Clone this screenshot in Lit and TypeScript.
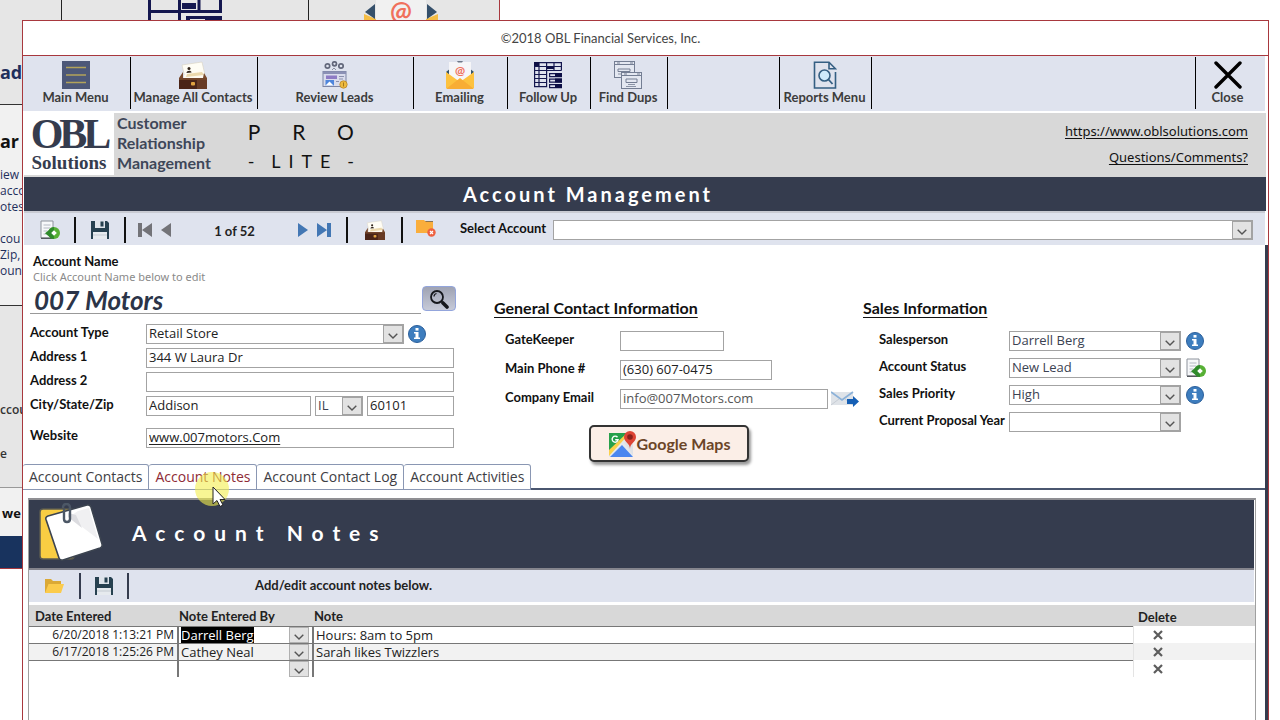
import { LitElement, html, css, type TemplateResult } from "lit";
import { customElement, property } from "lit/decorators.js";
import { classMap } from "lit/directives/class-map.js";

type Icon = TemplateResult;

const menuIcon = html`<svg width="28" height="28" viewBox="0 0 28 28" aria-hidden="true">
  <rect width="28" height="28" fill="#4d5878" />
  <path d="M4 6.500h20M4 14h20M4 21.500h20" stroke="#b3a35a" stroke-width="1.300" />
</svg>`;

const cardBox = (size: number): Icon => html`<svg width=${size} height=${size} viewBox="0 0 28 28" aria-hidden="true">
  <path d="M3 4 23 1l3 13-20 3z" fill="#fffdf5" stroke="#d9d2c0" stroke-width=".6" />
  <path d="M5 14l19-5 1 9H5z" fill="#fffaf0" />
  <path d="M8 13l15-2 2 3-18 2z" fill="#ecd9ad" />
  <circle cx="10" cy="7.500" r="1.500" fill="#33261c" /><path d="M7.500 12c0-3 5-3 5-.6z" fill="#33261c" />
  <path d="M0 17 4 11v6zM28 17l-3-5-1 5z" fill="#7a4a2c" />
  <rect y="17" width="28" height="11" fill="#4a2417" />
  <rect y="17" width="28" height="2" fill="#73452a" />
  <rect x="18" y="19" width="10" height="9" fill="#673a24" />
  <rect x="12" y="21" width="4" height="3.500" rx="1" fill="#e0a341" />
</svg>`;

const leadsIcon = html`<svg width="28" height="28" viewBox="0 0 28 28" aria-hidden="true">
  <g fill="none" stroke="#62677a" stroke-width="1.700"><circle cx="6.500" cy="5" r="2.200" /><circle cx="13.500" cy="2.800" r="2" /><circle cx="20" cy="5" r="2.200" /></g>
  <path d="M11 9l2-2 2 2" fill="none" stroke="#8b90a2" />
  <rect x="2" y="10.500" width="23" height="15" fill="#d9dcec" stroke="#7d85a4" />
  <rect x="2" y="10.500" width="23" height="2.500" fill="#8b91b5" />
  <rect x="5" y="14.500" width="11" height="3.500" fill="#8d7bc4" />
  <rect x="4.500" y="19" width="8.500" height="5.500" fill="#4f86dc" />
  <path d="M4.500 24.500l4-4 4 4z" fill="#fff" />
  <path d="M18 15.500h5M18 18h4M15 20.500h3" stroke="#8b91ad" />
  <circle cx="22.500" cy="23.500" r="3.700" fill="#eebb3f" stroke="#b9862a" stroke-width=".8" />
  <path d="M22.500 21.500v4" stroke="#a5761c" />
</svg>`;

const envelopeIcon = html`<svg width="28" height="28" viewBox="0 0 28 28" aria-hidden="true">
  <path d="M0 11 5 7v9zM28 11l-5-4v9z" fill="#35566b" />
  <path d="M3 1h22v18H3z" fill="#f6f6f8" />
  <path d="M11 0h6l-1 1.500h-4z" fill="#6d7788" />
  <text x="14" y="14" text-anchor="middle" font-family="Lato, sans-serif" font-size="12" font-weight="700" fill="#f0705c">@</text>
  <path d="M0 11v16h28V11L14 21z" fill="#fdc23f" />
  <path d="M0 28 14 17l14 11z" fill="#f8ad35" />
</svg>`;

const ledgerIcon = html`<svg width="28" height="28" viewBox="0 0 28 28" aria-hidden="true">
  <g fill="none" stroke="#14174f" stroke-width="1.200">
    <path d="M.6 1.600h12v24H.6zM.6 5.500h26.800M.6 9.500h26.800M.6 13.500h12M.6 17.500h12M.6 21.500h12M5 1.600v24M12.600 1.600h14.800v8M20 1.600v8" />
    <path d="M15.600 12.600h11.800v3H15.600zM15.600 18.100h11.800v3H15.600zM15.600 23.600h11.800v3H15.600z" />
  </g>
  <path d="M0 1h5v4H0zM13 5.500h7v2.500h-7zM21 12h7v4h-7zM21 17.500h7v4h-7zM21 23h7v4h-7z" fill="#0d0f45" />
</svg>`;

const dupsIcon = html`<svg width="28" height="28" viewBox="0 0 28 28" aria-hidden="true">
  <g fill="#e4e8f1" stroke="#747e93" stroke-width="1"><rect x=".5" y=".5" width="20" height="16" /><rect x="7.500" y="11.500" width="20" height="16" /></g>
  <path d="M.5 3.500h20M7.500 14.500h20M3 2h3M10 13h3M16 2h3M23 13h3" stroke="#747e93" />
  <path d="M4 8h12v2.500H4zM12 18h11v3.500H12z" fill="none" stroke="#747e93" />
  <path d="M4 13h4M14 23.500h7M12 25.500h10" stroke="#747e93" stroke-width=".8" />
</svg>`;

const reportIcon = html`<svg width="24" height="28" viewBox="0 0 24 28" aria-hidden="true">
  <path d="M22.500 11v16h-21V1.200H16l6.500 6.600H16V1.200" fill="none" stroke="#345f83" stroke-width="1.600" />
  <circle cx="11.500" cy="14.500" r="5.500" fill="#cdeafc" stroke="#345f83" stroke-width="1.600" />
  <path d="M15.500 18.500l4 4.500" stroke="#345f83" stroke-width="1.800" />
</svg>`;

const closeIcon = html`<svg width="28" height="28" viewBox="0 0 28 28" aria-hidden="true">
  <path d="M2 2l24 24M26 2 2 26" stroke="#000" stroke-width="3.400" stroke-linecap="round" />
</svg>`;

const addRecordIcon = html`<svg width="20" height="20" viewBox="0 0 20 20" aria-hidden="true">
  <path d="M1 1h12v17H1z" fill="#f7f8fa" stroke="#8d929b" />
  <path d="M1 18.300h12" stroke="#55585e" stroke-width="1.400" />
  <path d="M3.500 5h7M3.500 8h7M3.500 11h4M3.500 14h3" stroke="#b3b8c2" />
  <circle cx="14" cy="13" r="6" fill="#57b035" />
  <path d="M14 7a6 6 0 0 0-5 3l-4 3.200 4 3.300a6 6 0 0 0 5 2.500z" fill="#2f8a2b" />
  <path d="M14 10.200l2.800 2.800-2.800 2.800-2.800-2.800z" fill="#fff" />
</svg>`;

const saveIcon = html`<svg width="20" height="20" viewBox="0 0 20 20" aria-hidden="true">
  <path d="M1 1h16l2 2v16H1z" fill="#274150" />
  <rect x="5" y="1" width="10" height="7" fill="#dfe4ea" />
  <rect x="10.500" y="1.500" width="3" height="5" fill="#274150" />
  <rect x="3" y="12" width="14" height="7" fill="#e6eaee" />
  <path d="M3 15h14" stroke="#c3cad1" />
</svg>`;

const firstIcon = html`<svg width="14" height="14" viewBox="0 0 14 14" aria-hidden="true"><path d="M0 0h4v14H0zM14 0v14L4 7z" fill="#737378" /></svg>`;
const prevIcon = html`<svg width="10" height="14" viewBox="0 0 10 14" aria-hidden="true"><path d="M10 0v14L0 7z" fill="#737378" /></svg>`;
const nextIcon = html`<svg width="10" height="14" viewBox="0 0 10 14" aria-hidden="true"><path d="M0 0v14l10-7z" fill="#4377b4" /></svg>`;
const lastIcon = html`<svg width="14" height="14" viewBox="0 0 14 14" aria-hidden="true"><path d="M0 0v14l10-7zM10 0h4v14h-4z" fill="#4377b4" /></svg>`;

const folderDeleteIcon = html`<svg width="20" height="18" viewBox="0 0 20 18" aria-hidden="true">
  <path d="M8 2h9v10H8z" fill="#8a7352" />
  <path d="M0 1h8l2 2h7v11H0z" fill="#faae3c" />
  <circle cx="15.500" cy="13.500" r="4.200" fill="#ee6140" />
  <path d="M14 12l3 3m0-3-3 3" stroke="#fff" stroke-width="1.200" />
</svg>`;

const folderIcon = html`<svg width="20" height="16" viewBox="0 0 20 16" aria-hidden="true">
  <path d="M1 15V1h6l2 2h8v3" fill="#dba936" />
  <path d="M1 15 4.500 6H20l-3 9z" fill="#fbcb4c" />
</svg>`;

const infoIcon = html`<svg width="18" height="18" viewBox="0 0 18 18" aria-hidden="true">
  <circle cx="9" cy="9" r="8.500" fill="#3d7dbe" stroke="#2b5f9b" />
  <rect x="7.500" y="3" width="3" height="2.600" fill="#fff" />
  <path d="M6 7h4.500v5.500H12V14H6v-1.500h1.500v-4H6z" fill="#fff" />
</svg>`;

const searchIcon = html`<svg width="20" height="20" viewBox="0 0 20 20" aria-hidden="true">
  <circle cx="8" cy="8" r="6" fill="none" stroke="#15171c" stroke-width="1.800" />
  <path d="M5 7.500a3.200 3.200 0 0 1 2.500-3" fill="none" stroke="#15171c" stroke-width="1.200" />
  <path d="M12 12l2 2" stroke="#15171c" stroke-width="1.500" />
  <path d="M14 14l4 4" stroke="#15171c" stroke-width="3.600" stroke-linecap="round" />
</svg>`;

const mailSendIcon = html`<svg width="28" height="16" viewBox="0 0 28 16" aria-hidden="true">
  <path d="M0 1h22v13H0z" fill="#dfe3e8" />
  <path d="M0 1l11 8 11-8" fill="none" stroke="#8bb1d8" stroke-width="1.800" />
  <path d="M0 14l8-6M22 14l-8-6" stroke="#c6ccd4" />
  <path d="M16 8h6V5l6 5.500-6 5.500v-3h-6z" fill="#155fb5" />
</svg>`;

const mapsIcon = html`<svg width="28" height="28" viewBox="0 0 28 28" aria-hidden="true">
  <path d="M1 3h24v24H1z" fill="#e5e8ec" />
  <path d="M1 3h19L1 23z" fill="#27a04b" />
  <path d="M19 3h3L1 26v-6z" fill="#fbd04a" />
  <path d="M2 27 14 15l11 12z" fill="#4c86ef" />
  <path d="M16 13l9-9v21z" fill="#dfe2e6" />
  <path d="M9.500 7.300a3 3 0 1 0 .6 2.400H7.200" fill="none" stroke="#fff" stroke-width="1.400" />
  <path d="M22 19c0-6-6-7-6-12a6 6 0 0 1 12 0c0 5-6 6-6 12z" fill="#dd4435" />
  <circle cx="22" cy="7" r="2.800" fill="#8a211b" />
</svg>`;

const notesIcon = html`<svg width="66" height="60" viewBox="0 0 66 60" aria-hidden="true">
  <rect x="2" y="6" width="34" height="50" rx="3" fill="#f9cd43" stroke="#5a5a50" stroke-width="1.500" />
  <path d="M10 13 49 2q3-.8 4 2l11 37q.8 3-2 4L25 57q-3 .8-4-2L8 16.500q-.8-2.700 2-3.500z" fill="#fff" stroke="#3c4450" stroke-width="1.600" />
  <path d="M31 14l29 22-9-31-11 3z" fill="#f0f0f2" />
  <path d="M30 14l14 11-6-13-8-2z" fill="#dcdce0" />
  <path d="M26 6v10q0 3 3 3t3-3V5q0-4-3.500-4T25 5" fill="none" stroke="#4c5766" stroke-width="2.400" />
</svg>`;

const deleteIcon = html`<svg width="10" height="10" viewBox="0 0 10 10" aria-hidden="true">
  <path d="M1 1l8 8M9 1 1 9" stroke="#5c5c5c" stroke-width="2.200" />
</svg>`;

const chevron = html`<svg width="10" height="6" viewBox="0 0 10 6" aria-hidden="true">
  <path d="M.7.7 5 5 9.300.7" fill="none" stroke="#555" stroke-width="1.400" />
</svg>`;

const baseStyles = css`
  :host {
    font-family: Lato, "Liberation Sans", sans-serif;
  }
  * {
    box-sizing: border-box;
  }
  button {
    margin: 0;
    padding: 0;
    border: 0;
    background: none;
    font: inherit;
    color: inherit;
    cursor: pointer;
    display: flex;
    align-items: center;
    justify-content: center;
  }
  svg {
    display: block;
    flex: none;
  }
`;

@customElement("combo-box")
class ComboBox extends LitElement {
  @property() label = "";
  @property() value = "";
  @property({ type: Boolean }) dim = false;

  static styles = [
    baseStyles,
    css`
      :host {
        display: block;
        height: 20px;
        min-width: 0;
      }
      .combo {
        display: grid;
        grid-template-columns: 1fr 20px;
        height: 100%;
        border: 1px solid #a3a3a3;
        background: #fff;
      }
      select {
        appearance: none;
        grid-area: 1 / 1 / 2 / 3;
        width: 100%;
        border: 0;
        border-radius: 0;
        padding: 0 22px 2px 2px;
        background: transparent;
        font: 13px/16px "Open Sans", "Noto Sans", sans-serif;
        color: #222;
        outline: none;
      }
      select.dim {
        color: #3b4252;
      }
      .arrow {
        grid-area: 1 / 2;
        display: flex;
        align-items: center;
        justify-content: center;
        padding-top: 4px;
        border: 1px solid #a3a3a3;
        background: #e2e2e2;
        pointer-events: none;
      }
    `,
  ];

  render() {
    return html`<div class="combo">
      <select class=${classMap({ dim: this.dim })} aria-label=${this.label}>
        <option>${this.value}</option>
      </select>
      <span class="arrow">${chevron}</span>
    </div>`;
  }
}

interface Note {
  date: string;
  by: string;
  text: string;
}

const notes: Note[] = [
  { date: "6/20/2018 1:13:21 PM", by: "Darrell Berg", text: "Hours: 8am to 5pm" },
  { date: "6/17/2018 1:25:26 PM", by: "Cathey Neal", text: "Sarah likes Twizzlers" },
  { date: "", by: "", text: "" },
];

@customElement("account-notes")
class AccountNotes extends LitElement {
  static styles = [
    baseStyles,
    css`
      :host {
        display: flex;
        flex-direction: column;
        flex: 1;
        border: 1px solid #a0a0a0;
        border-top: 2px solid #8f8f93;
        border-bottom: 0;
        background: #fff;
      }
      .banner {
        display: flex;
        align-items: center;
        gap: 28px;
        height: 68px;
        padding: 0 0 2px 9px;
        margin-right: 1px;
        background: #353c4e;
        color: #fff;
      }
      h2 {
        margin: 0;
        font-size: 21px;
        line-height: 28px;
        letter-spacing: 9px;
      }
      .bar {
        display: flex;
        align-items: center;
        height: 34px;
        margin: 0 1px 0 0;
        border-top: 2px solid #85858d;
        background: #dfe3ee;
      }
      .tool {
        height: 26px;
        border-right: 2px solid #353c4e;
      }
      .open {
        width: 52px;
      }
      .save {
        width: 48px;
      }
      .hint {
        margin: 0 0 2px 126px;
        font-size: 13px;
        line-height: 18px;
        font-weight: 700;
        color: #222;
      }
      table {
        width: 100%;
        margin-top: 3px;
        table-layout: fixed;
        border-collapse: collapse;
      }
      .c-date {
        width: 149px;
      }
      .c-by {
        width: 135px;
      }
      .c-del {
        width: 122px;
      }
      th {
        height: 21px;
        padding: 2px 0 0 1px;
        background: #d8d8d8;
        text-align: left;
        font-size: 13px;
        line-height: 18px;
        color: #222;
      }
      th:first-child {
        padding-left: 6px;
      }
      th:last-child {
        padding-left: 5px;
      }
      td {
        height: 17px;
        padding: 0;
        border-top: 1px solid #777;
      }
      td:last-child {
        border-top: 0;
      }
      .by,
      .text {
        border-left: 2px solid #777;
      }
      .text {
        border-right: 1px solid #e4e4e4;
      }
      tr:nth-child(even) td {
        background: #f2f2f2;
      }
      input {
        display: block;
        width: 100%;
        height: 16px;
        padding: 0 2px;
        border: 0;
        outline: 0;
        background: transparent;
        font: 13px/16px "Open Sans", "Noto Sans", sans-serif;
        color: #222;
      }
      input::selection {
        background: #000;
        color: #fff;
      }
      .date input {
        text-align: right;
        padding-right: 3px;
        font-size: 12px;
      }
      .pick {
        display: grid;
        grid-template-columns: 1fr 20px;
        padding-right: 3px;
      }
      .pick button {
        height: 16px;
        padding-top: 4px;
        border: 1px solid #b0b0b0;
        background: #e2e2e2;
      }
      .del {
        width: 48px;
        height: 16px;
      }
    `,
  ];

  firstUpdated() {
    const first = this.renderRoot.querySelector<HTMLInputElement>(".pick input");
    first?.focus();
    first?.select();
  }

  render() {
    return html`
      <div class="banner">${notesIcon}<h2>Account Notes</h2></div>
      <div class="bar">
        <button class="tool open" aria-label="Open">${folderIcon}</button>
        <button class="tool save" aria-label="Save">${saveIcon}</button>
        <p class="hint">Add/edit account notes below.</p>
      </div>
      <table>
        <colgroup><col class="c-date" /><col class="c-by" /><col /><col class="c-del" /></colgroup>
        <thead><tr><th>Date Entered</th><th>Note Entered By</th><th>Note</th><th>Delete</th></tr></thead>
        <tbody>
          ${notes.map(
            (n) => html`<tr>
              <td class="date"><input aria-label="Date Entered" .value=${n.date} /></td>
              <td class="by">
                <div class="pick"><input aria-label="Note Entered By" .value=${n.by} /><button aria-label="Choose">${chevron}</button></div>
              </td>
              <td class="text"><input aria-label="Note" .value=${n.text} /></td>
              <td><button class="del" aria-label="Delete note">${deleteIcon}</button></td>
            </tr>`
          )}
        </tbody>
      </table>
    `;
  }
}

@customElement("app-root")
class AppRoot extends LitElement {
  static styles = [
    baseStyles,
    css`
      :host {
        display: block;
      }
      .desktop {
        position: relative;
        height: 100vh;
        overflow: hidden;
        background: #fff;
        color: #222;
      }

      /* window at the back */
      .back {
        width: 500px;
        border-right: 1px solid #a8383e;
        border-bottom: 1px solid #a8383e;
        background: #f1f1f1;
        color: #1f2f5c;
        font: 12px/16px "Open Sans", "Noto Sans", sans-serif;
      }
      .back-top {
        display: grid;
        grid-template-columns: 62px 247px 1fr;
        height: 105px;
        border-bottom: 1px solid #333;
        background: #e6e6e6;
      }
      .back-top > div {
        display: flex;
        justify-content: center;
        align-items: flex-start;
        border-right: 1px solid #222;
      }
      .back-top > div:first-child {
        justify-content: flex-start;
        padding-top: 60px;
      }
      .back-top > div:last-child {
        border-right: 0;
        padding-right: 6px;
      }
      .back-big {
        font-size: 18px;
        line-height: 24px;
        font-weight: 700;
      }
      .back-list {
        height: 201px;
        padding-top: 24px;
        border-bottom: 1px solid #333;
      }
      .back-list p,
      .back-grey p,
      .back-note p {
        margin: 0;
      }
      .back-list .back-big {
        margin-bottom: 14px;
        color: #111;
      }
      .back-list .gap {
        margin-top: 16px;
      }
      .back-grey {
        display: flex;
        flex-direction: column;
        gap: 28px;
        height: 182px;
        padding-top: 96px;
        border-bottom: 1px solid #999;
        background: #e6e6e6;
        font-weight: 600;
        color: #333;
      }
      .back-note {
        height: 48px;
        padding: 17px 0 0 2px;
        font-size: 13px;
        font-weight: 700;
        color: #111;
      }
      .back-foot {
        height: 32px;
        background: #18335e;
      }

      /* window in front */
      .window {
        position: absolute;
        inset: 20px 11px 0 22px;
        display: flex;
        flex-direction: column;
        border: 1px solid #a8383e;
        border-bottom: 0;
        background: #fff;
      }
      .caption {
        display: flex;
        justify-content: center;
        align-items: center;
        height: 35px;
        padding-right: 90px;
        border-bottom: 1px solid #a8383e;
        font-size: 13px;
        line-height: 18px;
        color: #444;
      }
      .ribbon {
        display: flex;
        height: 55px;
        margin-right: 3px;
        padding: 1px 0 2px;
        background: #dfe3ee;
      }
      .ribbon button {
        flex-direction: column;
        justify-content: flex-start;
        padding: 4px 2px 0 0;
        border-right: 1px solid #000;
        font-size: 13px;
        line-height: 16px;
        font-weight: 700;
        color: #3c3c3c;
        white-space: nowrap;
      }
      .w-menu {
        width: 108px;
      }
      .w-contacts {
        width: 127px;
      }
      .w-leads {
        width: 156px;
      }
      .w-mail {
        width: 94px;
      }
      .w-follow {
        width: 83px;
      }
      .w-dups {
        width: 77px;
      }
      .blank {
        width: 112px;
        border-right: 1px solid #000;
      }
      .w-reports {
        width: 92px;
      }
      .rest {
        flex: 1;
        border-right: 1px solid #000;
      }
      .ribbon .w-close {
        width: 69px;
        padding-right: 6px;
        border-right: 0;
      }

      .brand {
        display: flex;
        height: 64px;
        margin: 2px 2px 0 1px;
        background: #d8d8d8;
      }
      .logo {
        width: 90px;
        height: 62px;
        padding-top: 1px;
        background: #fff;
        color: #353c4e;
        text-align: center;
        font-family: "Liberation Serif", serif;
        font-weight: 700;
      }
      .logo-mark {
        display: block;
        font-size: 42px;
        line-height: 41px;
        letter-spacing: -4px;
      }
      .logo-name {
        display: block;
        font-size: 19px;
        line-height: 16px;
      }
      .tagline {
        margin: 0 0 0 3px;
        font-size: 16px;
        line-height: 20px;
        font-weight: 700;
        color: #3e4759;
      }
      .edition {
        display: flex;
        flex-direction: column;
        align-items: center;
        gap: 4px;
        width: 120px;
        margin: 6px 0 0 30px;
        color: #111;
      }
      .pro,
      .lite {
        display: flex;
        justify-content: space-between;
        width: 106px;
        font-size: 21px;
        line-height: 26px;
      }
      .lite {
        font-size: 18px;
        line-height: 24px;
      }
      .lite-word {
        letter-spacing: 8px;
        padding-left: 8px;
      }
      .links {
        display: flex;
        flex-direction: column;
        align-items: flex-end;
        gap: 8px;
        margin: 9px 18px 0 auto;
        font: 13px/18px "Noto Sans", sans-serif;
      }
      a {
        color: #111;
        text-underline-offset: 2px;
      }

      h1 {
        margin: 0 2px 0 1px;
        padding-right: 114px;
        height: 34px;
        background: #353c4e;
        color: #fff;
        text-align: center;
        font-size: 20px;
        line-height: 34px;
        letter-spacing: 3px;
      }
      .records {
        display: flex;
        align-items: center;
        height: 34px;
        margin: 0 3px 0 1px;
        padding: 2px 0 0 2px;
        border-top: 2px solid #c9cbd3;
        background: #dfe3ee;
      }
      .cell {
        height: 26px;
        border-right: 2px solid #111;
      }
      .records > .cell {
        width: 50px;
      }
      .records > .pager {
        display: flex;
        align-items: center;
        width: 222px;
        padding: 0 15px 0 12px;
      }
      .pager span {
        flex: 1;
        padding-top: 2px;
        text-align: center;
        font-size: 13px;
        line-height: 18px;
        font-weight: 700;
      }
      .pair {
        display: flex;
        gap: 9px;
      }
      .records > .cards {
        width: 55px;
      }
      .records > .remove {
        width: 46px;
        padding-bottom: 4px;
        border: 0;
      }
      .pick-label {
        margin: 0 7px 4px 11px;
      }
      .pick {
        flex: 1;
        margin-right: 12px;
      }
      label,
      .pick-label {
        font-size: 13px;
        line-height: 18px;
        font-weight: 700;
        color: #111;
        white-space: nowrap;
      }

      .body {
        display: flex;
        flex-direction: column;
        flex: 1;
        border-right: 3px solid #353c4e;
      }
      .form {
        display: grid;
        grid-template-columns: 471px 369px 1fr;
        height: 219px;
      }
      .name {
        display: grid;
        grid-template-columns: 391px 34px;
        align-items: end;
        column-gap: 1px;
        margin: 0 0 10px 7px;
      }
      .name-label {
        grid-column: 1 / 3;
        margin: 7px 0 0 3px;
      }
      .tip {
        grid-column: 1 / 3;
        margin: 0 0 0 3px;
        font: 11px/14px "Noto Sans", sans-serif;
        color: #8a8a8a;
      }
      .name input {
        width: 100%;
        height: 30px;
        padding: 2px 0 0 4px;
        border: 0;
        border-bottom: 1px solid #999;
        background: none;
        font: italic 700 26px/28px Lato, sans-serif;
        color: #2b3448;
      }
      .find {
        height: 25px;
        margin-bottom: 3px;
        border: 1px solid #93a5dc;
        border-radius: 4px;
        background: linear-gradient(#9fa3b3, #c6cad8);
      }
      .fields {
        display: grid;
        align-items: center;
        grid-auto-rows: 20px;
      }
      .fields-a {
        grid-template-columns: 116px 308px;
        grid-template-rows: repeat(4, 20px) 28px;
        row-gap: 4px;
        margin-left: 7px;
      }
      .fields-b {
        grid-template-columns: 115px 208px 30px;
        row-gap: 9px;
        margin: 13px 0 0 11px;
      }
      .fields-c {
        grid-template-columns: 130px 172px 24px;
        row-gap: 7px;
        margin: 13px 0 0 16px;
      }
      .fields label {
        margin-bottom: 4px;
      }
      .box {
        width: 100%;
        height: 20px;
        padding: 0 2px 2px;
        border: 1px solid #a3a3a3;
        border-radius: 0;
        background: #fff;
        font: 13px/16px "Open Sans", "Noto Sans", sans-serif;
        color: #222;
      }
      .line {
        display: flex;
        gap: 4px;
      }
      .type {
        width: 258px;
      }
      .city {
        flex: 1;
      }
      .state {
        width: 48px;
      }
      .zip {
        width: 87px;
      }
      .site {
        align-self: end;
      }
      .link-box {
        text-decoration: underline;
        text-underline-offset: 2px;
      }
      .gate {
        width: 104px;
      }
      .phone {
        width: 152px;
      }
      .email {
        color: #555;
      }
      .send {
        padding-left: 3px;
      }
      .side {
        padding-left: 5px;
      }
      h2 {
        margin: 53px 0 0;
        font-size: 16px;
        line-height: 20px;
        color: #111;
        text-decoration: underline;
        text-underline-offset: 3px;
      }
      .maps {
        gap: 1px;
        width: 160px;
        height: 37px;
        margin: 16px 0 0 95px;
        border: 2px solid #333;
        border-radius: 5px;
        background: #fbeee7;
        box-shadow: 2px 3px 3px #9a9a9a;
        font-size: 16px;
        font-weight: 700;
        color: #6b4528;
      }

      .tabs {
        display: flex;
        height: 26px;
      }
      .tabs button {
        height: 26px;
        padding: 0 6px 1px;
        border: 1px solid #8a97b3;
        border-left: 0;
        border-radius: 3px 3px 0 0;
        font: 500 14px/18px "Open Sans", "Noto Sans", sans-serif;
        color: #3e3e44;
      }
      .tabs .on {
        color: #8e2b35;
      }
      .tabs-rest {
        flex: 1;
        border-bottom: 2px solid #4a566f;
      }
      .page {
        display: flex;
        flex: 1;
        padding: 8px 9px 0 5px;
      }
      .pointer {
        position: absolute;
        left: 194px;
        top: 470px;
        pointer-events: none;
      }
    `,
  ];

  private info(label: string) {
    return html`<button aria-label=${label}>${infoIcon}</button>`;
  }

  private tool(cls: string, label: string, icon: Icon) {
    return html`<button class=${cls}>${icon}${label}</button>`;
  }

  render() {
    return html`<div class="desktop">
      <div class="back">
        <div class="back-top">
          <div><span class="back-big">ad</span></div>
          <div>
            <svg width="74" height="28" viewBox="0 0 74 28" aria-hidden="true">
              <path d="M1.500 0v28M72.500 0v11.500H1.500M31.500 0v28M51 0v11" fill="none" stroke="#14174f" stroke-width="3" />
              <path d="M34 3h14v6H34zM38 16h36v12H38z" fill="#14174f" /><path d="M42 19h15v9H42z" fill="#e6e6e6" />
            </svg>
          </div>
          <div>
            <svg width="74" height="34" viewBox="0 0 74 34" aria-hidden="true">
              <path d="M12 0h50v34H12z" fill="#f1f1f1" />
              <path d="M0 14l12 5v15H0zM74 14l-12 5v15h12z" fill="#f4bd45" />
              <path d="M1 12 11 4v15zM73 12 63 4v15z" fill="#35506b" />
              <text x="37" y="21" text-anchor="middle" font-family="Lato, sans-serif" font-size="26" font-weight="700" fill="#f0705c">@</text>
            </svg>
          </div>
        </div>
        <div class="back-list">
          <p class="back-big">ar</p>
          <p>iew</p><p>acco</p><p>otes</p>
          <p class="gap">cou</p><p>Zip,</p><p>oun</p>
        </div>
        <div class="back-grey"><p>ccou</p><p>e</p></div>
        <div class="back-note"><p>we</p></div>
        <div class="back-foot"></div>
      </div>

      <div class="window">
        <div class="caption">©2018 OBL Financial Services, Inc.</div>
        <nav class="ribbon">
          ${this.tool("w-menu", "Main Menu", menuIcon)}
          ${this.tool("w-contacts", "Manage All Contacts", cardBox(28))}
          ${this.tool("w-leads", "Review Leads", leadsIcon)}
          ${this.tool("w-mail", "Emailing", envelopeIcon)}
          ${this.tool("w-follow", "Follow Up", ledgerIcon)}
          ${this.tool("w-dups", "Find Dups", dupsIcon)}
          <span class="blank"></span>
          ${this.tool("w-reports", "Reports Menu", reportIcon)}
          <span class="rest"></span>
          ${this.tool("w-close", "Close", closeIcon)}
        </nav>
        <header class="brand">
          <div class="logo"><span class="logo-mark">OBL</span><span class="logo-name">Solutions</span></div>
          <p class="tagline">Customer<br />Relationship<br />Management</p>
          <div class="edition">
            <div class="pro"><span>P</span><span>R</span><span>O</span></div>
            <div class="lite"><span>-</span><span class="lite-word">LITE</span><span>-</span></div>
          </div>
          <div class="links">
            <a href="https://www.oblsolutions.com">https://www.oblsolutions.com</a>
            <a href="#questions">Questions/Comments?</a>
          </div>
        </header>
        <h1>Account Management</h1>
        <div class="records">
          <button class="cell" aria-label="New account">${addRecordIcon}</button>
          <button class="cell" aria-label="Save">${saveIcon}</button>
          <div class="cell pager">
            <div class="pair">
              <button aria-label="First">${firstIcon}</button><button aria-label="Previous">${prevIcon}</button>
            </div>
            <span>1 of 52</span>
            <div class="pair">
              <button aria-label="Next">${nextIcon}</button><button aria-label="Last">${lastIcon}</button>
            </div>
          </div>
          <button class="cell cards" aria-label="Contacts">${cardBox(20)}</button>
          <button class="cell remove" aria-label="Delete account">${folderDeleteIcon}</button>
          <span class="pick-label">Select Account</span>
          <combo-box class="pick" label="Select Account"></combo-box>
        </div>

        <div class="body">
          <div class="form">
            <section>
              <div class="name">
                <label class="name-label" for="name">Account Name</label>
                <p class="tip">Click Account Name below to edit</p>
                <input id="name" value="007 Motors" />
                <button class="find" aria-label="Find account">${searchIcon}</button>
              </div>
              <div class="fields fields-a">
                <label>Account Type</label>
                <div class="line"><combo-box class="type" label="Account Type" value="Retail Store"></combo-box>${this.info("About account type")}</div>
                <label for="a1">Address 1</label><input class="box" id="a1" value="344 W Laura Dr" />
                <label for="a2">Address 2</label><input class="box" id="a2" />
                <label for="city">City/State/Zip</label>
                <div class="line">
                  <input class="box city" id="city" value="Addison" />
                  <combo-box class="state" label="State" value="IL" dim></combo-box>
                  <input class="box zip" aria-label="Zip" value="60101" />
                </div>
                <label class="site" for="web">Website</label>
                <input class="box site link-box" id="web" value="www.007motors.Com" />
              </div>
            </section>
            <section>
              <h2>General Contact Information</h2>
              <div class="fields fields-b">
                <label for="gate">GateKeeper</label><input class="box gate" id="gate" /><span></span>
                <label for="phone">Main Phone #</label><input class="box phone" id="phone" value="(630) 607-0475" /><span></span>
                <label for="email">Company Email</label><input class="box email" id="email" value="info@007Motors.com" />
                <button class="send" aria-label="Send email">${mailSendIcon}</button>
              </div>
              <button class="maps">${mapsIcon}Google Maps</button>
            </section>
            <section>
              <h2>Sales Information</h2>
              <div class="fields fields-c">
                <label>Salesperson</label><combo-box label="Salesperson" value="Darrell Berg" dim></combo-box><span class="side">${this.info("About salesperson")}</span>
                <label>Account Status</label><combo-box label="Account Status" value="New Lead" dim></combo-box><span class="side"><button aria-label="Add status">${addRecordIcon}</button></span>
                <label>Sales Priority</label><combo-box label="Sales Priority" value="High" dim></combo-box><span class="side">${this.info("About priority")}</span>
                <label>Current Proposal Year</label><combo-box label="Current Proposal Year"></combo-box><span></span>
              </div>
            </section>
          </div>
          <div class="tabs" role="tablist">
            ${["Account Contacts", "Account Notes", "Account Contact Log", "Account Activities"].map(
              (t) => html`<button role="tab" class=${classMap({ on: t === "Account Notes" })}>${t}</button>`
            )}
            <span class="tabs-rest"></span>
          </div>
          <div class="page"><account-notes></account-notes></div>
        </div>
      </div>

      <svg class="pointer" width="38" height="38" viewBox="0 0 38 38" aria-hidden="true">
        <circle cx="18" cy="19" r="17" fill="#f3ee4c" fill-opacity=".6" />
        <path d="M19 17v17l4-3.500 3 6 3-1.500-3-5.500h5z" fill="#fff" stroke="#222" />
      </svg>
    </div>`;
  }
}
